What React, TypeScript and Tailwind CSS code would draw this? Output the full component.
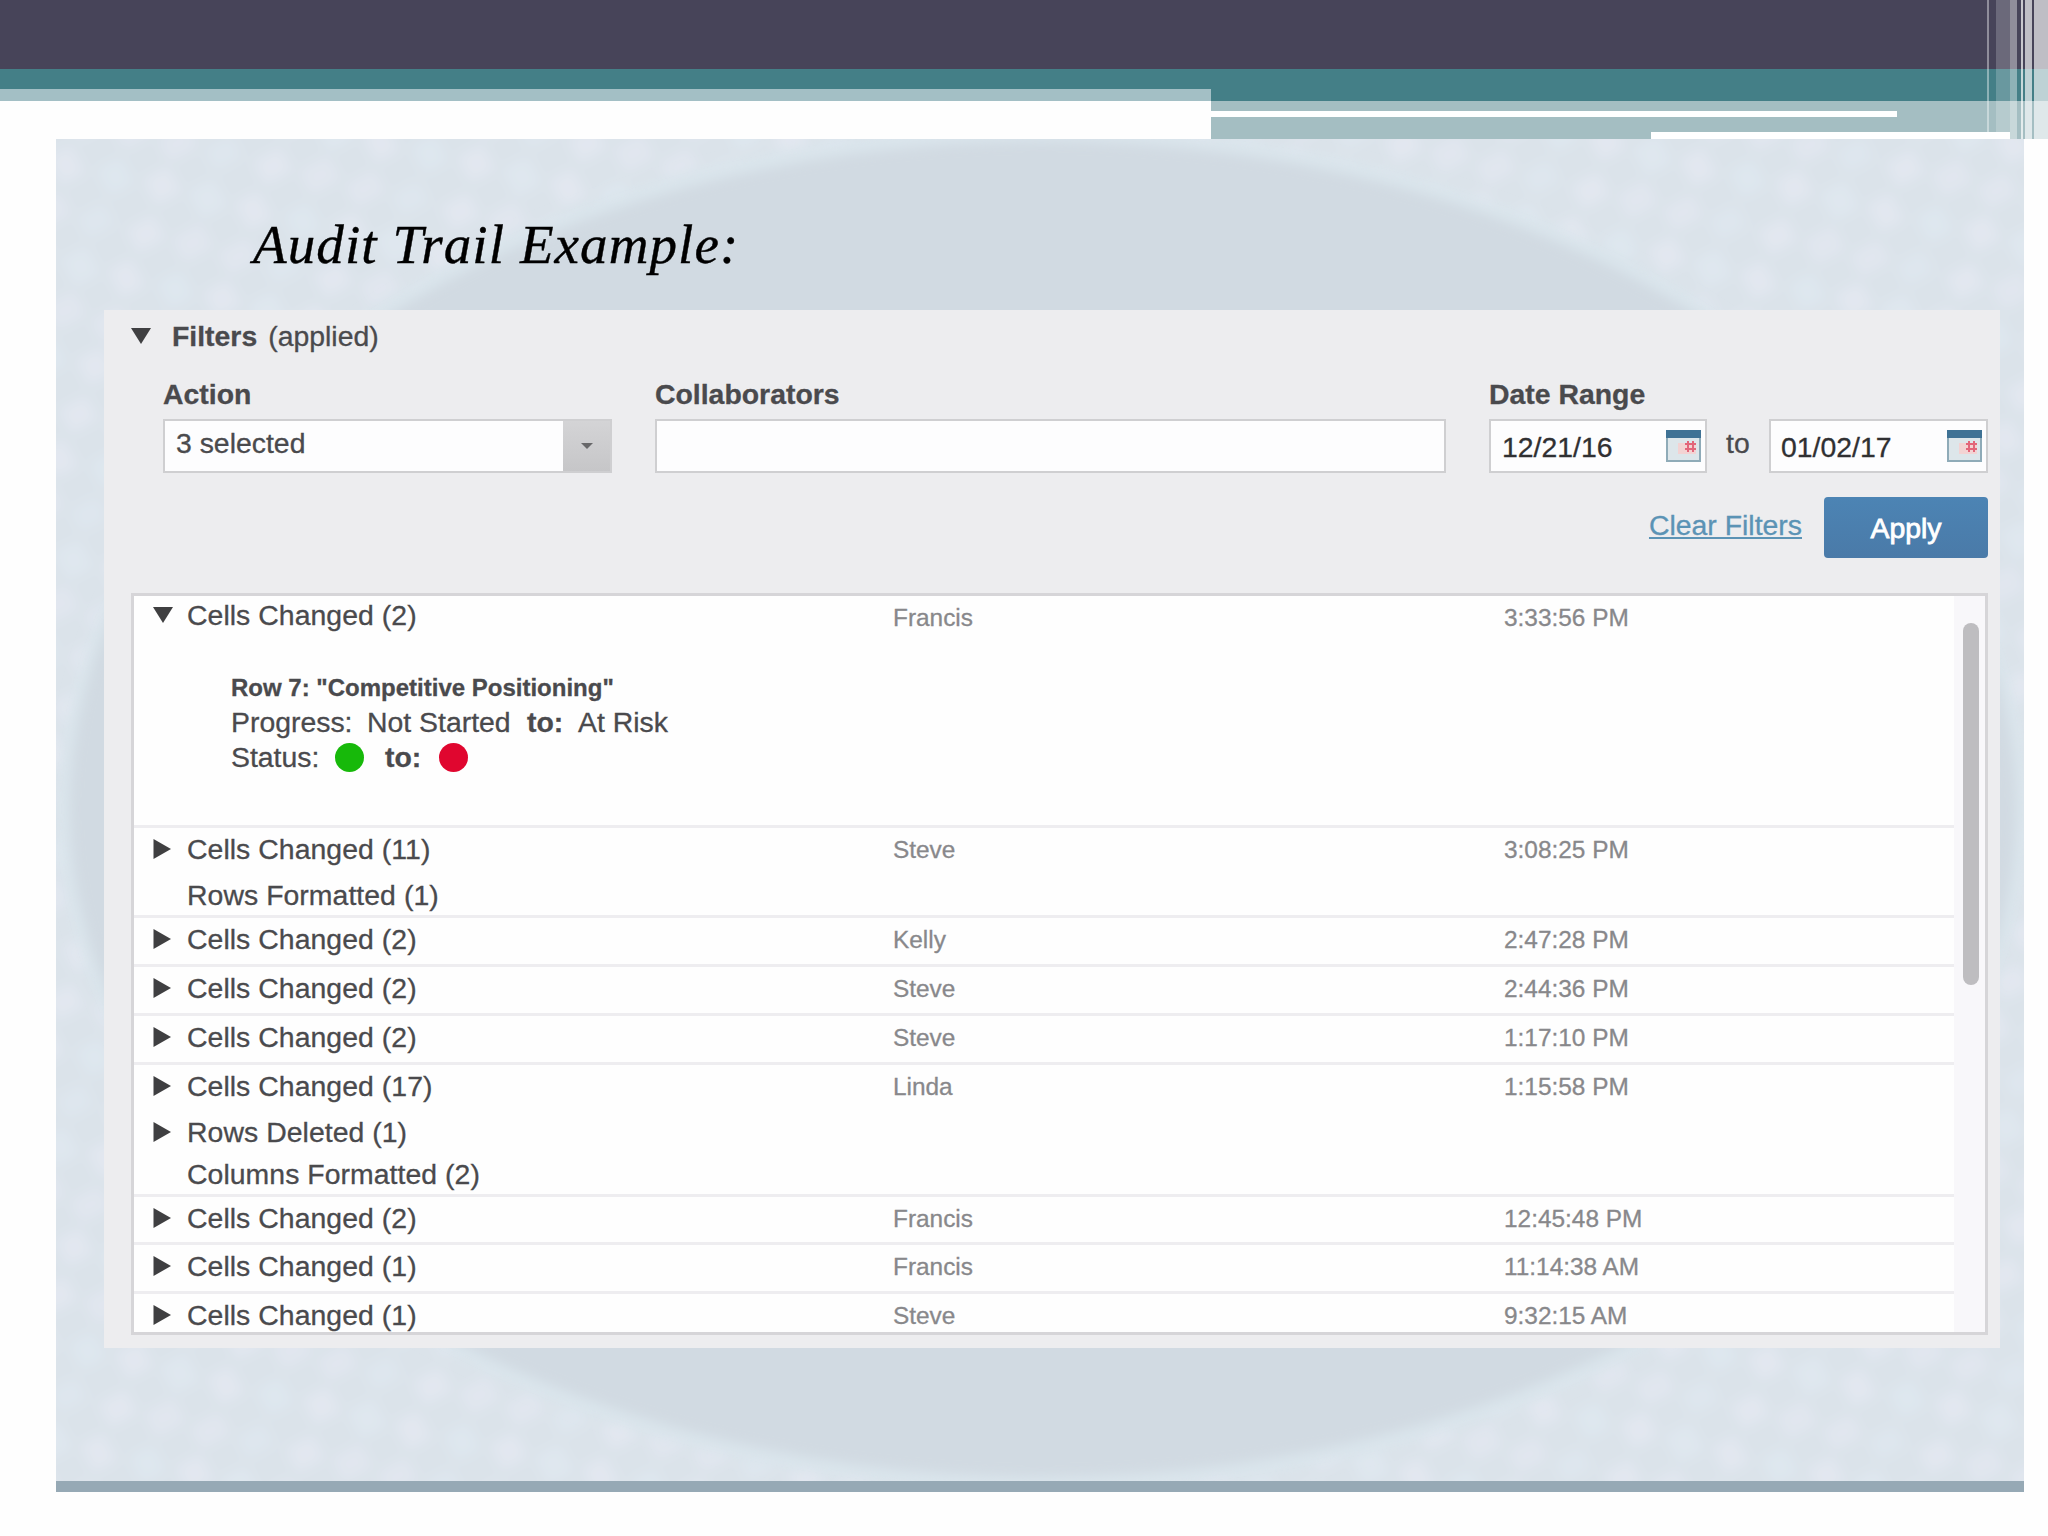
interface AuditLine {
  label: string;
  height: string;
  arrow?: 'right' | 'down';
}

interface AuditEntry {
  user: string;
  time: string;
  height: string;
  lines: AuditLine[];
  expanded?: boolean;
}

const entries: AuditEntry[] = [
  { user: 'Francis', time: '3:33:56 PM', height: 'h-[232px]', expanded: true, lines: [{ label: 'Cells Changed (2)', height: 'h-[38px]', arrow: 'down' }] },
  {
    user: 'Steve', time: '3:08:25 PM', height: 'h-[90px]',
    lines: [
      { label: 'Cells Changed (11)', height: 'h-[42px]', arrow: 'right' },
      { label: 'Rows Formatted (1)', height: 'h-[50px]' },
    ],
  },
  { user: 'Kelly', time: '2:47:28 PM', height: 'h-[49px]', lines: [{ label: 'Cells Changed (2)', height: 'h-[42px]', arrow: 'right' }] },
  { user: 'Steve', time: '2:44:36 PM', height: 'h-[49px]', lines: [{ label: 'Cells Changed (2)', height: 'h-[42px]', arrow: 'right' }] },
  { user: 'Steve', time: '1:17:10 PM', height: 'h-[49px]', lines: [{ label: 'Cells Changed (2)', height: 'h-[42px]', arrow: 'right' }] },
  {
    user: 'Linda', time: '1:15:58 PM', height: 'h-[132px]',
    lines: [
      { label: 'Cells Changed (17)', height: 'h-[42px]', arrow: 'right' },
      { label: 'Rows Deleted (1)', height: 'h-[50px]', arrow: 'right' },
      { label: 'Columns Formatted (2)', height: 'h-[34px]' },
    ],
  },
  { user: 'Francis', time: '12:45:48 PM', height: 'h-[48px]', lines: [{ label: 'Cells Changed (2)', height: 'h-[41px]', arrow: 'right' }] },
  { user: 'Francis', time: '11:14:38 AM', height: 'h-[49px]', lines: [{ label: 'Cells Changed (1)', height: 'h-[42px]', arrow: 'right' }] },
  { user: 'Steve', time: '9:32:15 AM', height: 'h-[41px]', lines: [{ label: 'Cells Changed (1)', height: 'h-[42px]', arrow: 'right' }] },
];

function Arrow({ direction }: { direction: 'right' | 'down' }) {
  return direction === 'down' ? (
    <svg width="20" height="16" viewBox="0 0 20 16" className="shrink-0 fill-[#3f3f41]">
      <path d="M0 0H20L10 16Z" />
    </svg>
  ) : (
    <svg width="18" height="20" viewBox="0 0 18 20" className="shrink-0 fill-[#3f3f41]">
      <path d="M0.500 0L18 10L0.500 20Z" />
    </svg>
  );
}

function CalendarIcon() {
  return (
    <svg width="35" height="32" viewBox="0 0 35 32" className="shrink-0">
      <rect x="1" y="1" width="33" height="30" fill="#dde6ea" stroke="#8fabb8" strokeWidth="2" />
      <rect width="35" height="8" fill="#3f7295" />
      <rect x="12" y="13" width="18" height="11" fill="#f3d3d3" />
      <path d="M22 11V22M27 11V22M19 14H30M19 19H30" stroke="#e2667a" strokeWidth="2" />
    </svg>
  );
}

function Backdrop() {
  return (
    <svg className="absolute inset-0 h-full w-full" viewBox="56 139 1968 1342" preserveAspectRatio="none">
      <defs>
        <pattern id="checks" width="144" height="128" patternUnits="userSpaceOnUse" patternTransform="rotate(-28)">
          <rect width="144" height="128" fill="#dbe3ea" />
          <rect x="4" y="6" width="30" height="26" fill="#e2e7f0" />
          <rect x="76" y="2" width="28" height="30" fill="#dfe7ef" />
          <rect x="40" y="36" width="32" height="26" fill="#e1e6ef" />
          <rect x="112" y="34" width="26" height="30" fill="#e2e7f0" />
          <rect x="6" y="68" width="26" height="28" fill="#dee7ef" />
          <rect x="74" y="70" width="32" height="24" fill="#e1e6ef" />
          <rect x="42" y="98" width="28" height="28" fill="#e2e7f0" />
          <rect x="110" y="100" width="30" height="24" fill="#dee6ee" />
        </pattern>
        <filter id="soften">
          <feGaussianBlur stdDeviation="6" />
        </filter>
      </defs>
      <rect x="56" y="139" width="1968" height="1342" fill="#dce4eb" />
      <rect x="26" y="109" width="2028" height="1402" fill="url(#checks)" filter="url(#soften)" />
      <ellipse cx="1043" cy="809" rx="984" ry="682" fill="#dae5ec" filter="url(#soften)" />
      <ellipse cx="1043" cy="809" rx="973" ry="668" fill="#d1dae2" filter="url(#soften)" />
    </svg>
  );
}

function Header() {
  return (
    <header className="relative h-[139px] shrink-0">
      <div className="h-[69px] bg-[#474459]" />
      <div className="flex h-[70px]">
        <div className="w-[1211px]">
          <div className="h-5 bg-[#447f87]" />
          <div className="h-3 bg-[#a3bfc5]" />
        </div>
        <div className="flex-1 bg-[#a4bec2]">
          <div className="h-8 bg-[#447f87]" />
          <div className="mt-2.5 h-1.5 w-[686px] bg-white" />
        </div>
      </div>
      <div className="absolute top-0 right-0 flex h-full">
        <div className="w-0.5 bg-white/40" />
        <div className="ml-[7px] w-3.5 bg-white/20" />
        <div className="w-[7px] bg-white/40" />
        <div className="ml-1 w-0.5 bg-white/70" />
        <div className="ml-0.5 w-[7px] bg-white/65" />
        <div className="ml-0.5 w-3.5 bg-white/65" />
      </div>
      <div className="absolute right-[38px] bottom-0 h-[7px] w-[359px] bg-white" />
    </header>
  );
}

function DateField({ value, className }: { value: string; className: string }) {
  return (
    <div className={`flex h-[54px] items-center justify-between border-2 border-[#cfcfd1] bg-[#fdfdfe] pr-1 text-[#303032] ${className}`}>
      <span className="pt-0.5">{value}</span>
      <CalendarIcon />
    </div>
  );
}

function Filters() {
  return (
    <section>
      <div className="flex h-[51px] items-center pl-[27px]">
        <Arrow direction="down" />
        <b className="ml-[21px]">Filters</b>
        <span className="ml-[11px]">(applied)</span>
      </div>
      <div className="flex pt-px pl-[59px]">
        <div className="w-[492px]">
          <div className="h-[57px] pt-[15px] font-bold">Action</div>
          <div className="flex h-[54px] w-[449px] border-2 border-[#cfcfd1] bg-[#fdfdfe]">
            <span className="flex-1 pl-[11px] leading-[45px]">3 selected</span>
            <div className="flex w-[47px] items-center justify-center bg-linear-to-b from-[#d4d4d6] to-[#c6c6c8]">
              <svg width="12" height="6" viewBox="0 0 12 6" className="fill-[#68686a]">
                <path d="M0 0H12L6 6Z" />
              </svg>
            </div>
          </div>
        </div>
        <div className="w-[834px]">
          <div className="h-[57px] pt-[15px] font-bold">Collaborators</div>
          <div className="h-[54px] w-[791px] border-2 border-[#cfcfd1] bg-[#fdfdfe]" />
        </div>
        <div>
          <div className="h-[57px] pt-[15px] font-bold">Date Range</div>
          <div className="flex">
            <DateField value="12/21/16" className="w-[218px] pl-[11px]" />
            <span className="w-[62px] pt-[7px] pl-[19px]">to</span>
            <DateField value="01/02/17" className="w-[219px] pl-[10px]" />
          </div>
        </div>
      </div>
      <div className="mt-6 flex justify-end pr-3">
        <span className="mr-[22px] pt-[11px] text-[#5b93b5] underline decoration-2 underline-offset-2">Clear Filters</span>
        <button className="h-[61px] w-[164px] rounded bg-linear-to-b from-[#4c84b4] to-[#4a7aa8] text-white [-webkit-text-stroke:0.8px_white]">
          Apply
        </button>
      </div>
    </section>
  );
}

function CellDetail() {
  return (
    <div className="pt-[36px] pl-[97px] leading-[35px]">
      <div className="text-[24px] font-bold">Row 7: "Competitive Positioning"</div>
      <div className="flex">
        <span className="w-[136px]">Progress:</span>
        <span className="w-[160px]">Not Started</span>
        <b className="w-[51px]">to:</b>
        <span>At Risk</span>
      </div>
      <div className="flex items-center">
        <span className="w-[104px]">Status:</span>
        <i className="mr-[21px] size-[29px] rounded-full bg-[#17b90a]" />
        <b className="w-[54px]">to:</b>
        <i className="size-[29px] rounded-full bg-[#e0062f]" />
      </div>
    </div>
  );
}

function AuditLog() {
  return (
    <section className="mt-[35px] ml-[27px] flex h-[742px] w-[1857px] overflow-hidden border-[3px] border-[#d6d5d8] bg-[#fefefe]">
      <div className="w-[1820px]">
        {entries.map((entry, i) => (
          <div key={i} className={`flex border-b-[3px] border-[#eeedf0] ${entry.height}`}>
            <div className="w-[759px]">
              {entry.lines.map((line) => (
                <div key={line.label} className={`flex items-center pl-[19px] ${line.height}`}>
                  <div className="w-[34px]">{line.arrow && <Arrow direction={line.arrow} />}</div>
                  <span className="tracking-[0.050px] whitespace-nowrap">{line.label}</span>
                </div>
              ))}
              {entry.expanded && <CellDetail />}
            </div>
            <div className="flex h-[44px] items-center text-[24.400px] text-[#88888b]">
              <span className="w-[611px]">{entry.user}</span>
              <span>{entry.time}</span>
            </div>
          </div>
        ))}
      </div>
      <div className="flex-1 bg-[#f8f7fa] pt-[27px] pl-[9px]">
        <div className="h-[362px] w-4 rounded-full bg-[#bebdc0]" />
      </div>
    </section>
  );
}

export default function App() {
  return (
    <div className="flex h-[1536px] w-[2048px] flex-col overflow-hidden bg-[#fefefe]">
      <Header />
      <main className="relative ml-14 h-[1353px] w-[1968px] border-b-[11px] border-[#96a9b5]">
        <Backdrop />
        <div className="relative">
          <h1 className="h-[171px] pt-[66px] pl-[197px] font-['Liberation_Serif',serif] text-[55px] leading-[80px] tracking-[1.100px] text-black italic [-webkit-text-stroke:0.4px_black]">
            Audit Trail Example:
          </h1>
          <div className="ml-12 h-[1038px] w-[1896px] bg-[#ededef] font-['Liberation_Sans',Arial,sans-serif] text-[28.400px] leading-[34px] text-[#4a4a4d] [-webkit-text-stroke:0.3px]">
            <Filters />
            <AuditLog />
          </div>
        </div>
      </main>
    </div>
  );
}
